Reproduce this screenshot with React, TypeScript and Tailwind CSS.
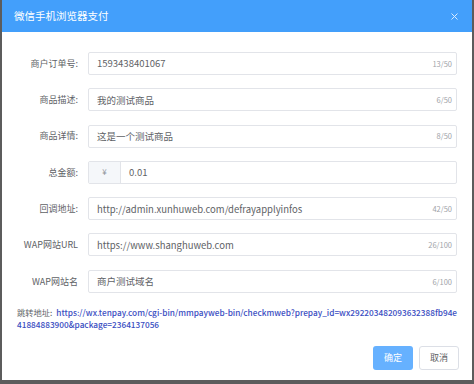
import React from "react";

const font = { fontFamily: '"Noto Sans CJK SC", "Noto Sans", sans-serif' };

type Row = { label: string; value: string; count?: string; prepend?: string };

const rows: Row[] = [
  { label: "商户订单号:", value: "1593438401067", count: "13/50" },
  { label: "商品描述:", value: "我的测试商品", count: "6/50" },
  { label: "商品详情:", value: "这是一个测试商品", count: "8/50" },
  { label: "总金额:", value: "0.01", prepend: "¥" },
  { label: "回调地址:", value: "http://admin.xunhuweb.com/defrayapplyinfos", count: "42/50" },
  { label: "WAP网站URL", value: "https://www.shanghuweb.com", count: "26/100" },
  { label: "WAP网站名", value: "商户测试域名", count: "6/100" },
];

export default function App() {
  return (
    <div className="w-[474px] h-[384px] bg-[#5c5c5c] overflow-hidden" style={font}>
      <div className="ml-[2px] w-[470px] h-[380px] bg-white flex flex-col">
        <div className="h-[32px] bg-[#439ffb] flex items-center justify-between pl-[12px] pr-[14px]">
          <span className="text-white text-[10.5px] leading-none">微信手机浏览器支付</span>
          <svg width="7" height="7" viewBox="0 0 7 7" className="opacity-80">
            <path d="M0.5 0.5 L6.5 6.5 M6.5 0.5 L0.5 6.5" stroke="#ffffff" strokeWidth="1" />
          </svg>
        </div>
        <div className="pt-[20px] pl-[15px] pr-[15px] flex flex-col gap-[13.3px]">
          {rows.map((r) => (
            <div key={r.label} className="flex items-center h-[23px]">
              <div className="w-[61px] text-right text-[9px] text-[#606266] whitespace-nowrap">{r.label}</div>
              <div className="ml-[10px] flex-1 h-[23px] border border-[#e2e4e9] rounded-[2px] flex items-center">
                {r.prepend && (
                  <div className="w-[32px] h-full bg-[#f5f7fa] border-r border-[#e2e4e9] flex items-center justify-center text-[8px] text-[#909399]">
                    {r.prepend}
                  </div>
                )}
                <div className="flex-1 pl-[8px] text-[9.5px] text-[#606266] whitespace-nowrap">{r.value}</div>
                {r.count && <div className="pr-[4px] text-[7.5px] text-[#a0a3a8]">{r.count}</div>}
              </div>
            </div>
          ))}
        </div>
        <div className="mt-[13.5px] pl-[15px] pr-[13px] text-[8.25px] leading-[12px] whitespace-nowrap">
          <span className="text-[#606266]">跳转地址:</span>
          <span className="ml-[4px] text-[#3a4ec2] font-medium">
            https://wx.tenpay.com/cgi-bin/mmpayweb-bin/checkmweb?prepay_id=wx292203482093632388fb94e
            <br />
            41884883900&amp;package=2364137056
          </span>
        </div>
        <div className="mt-auto pb-[10px] pr-[13px] flex justify-end gap-[6px]">
          <button className="w-[40px] h-[24px] rounded-[3px] bg-[#66b1ff] text-white text-[9px]">确定</button>
          <button className="w-[40px] h-[24px] rounded-[3px] bg-white border border-[#dcdfe6] text-[#606266] text-[9px]">取消</button>
        </div>
      </div>
    </div>
  );
}
